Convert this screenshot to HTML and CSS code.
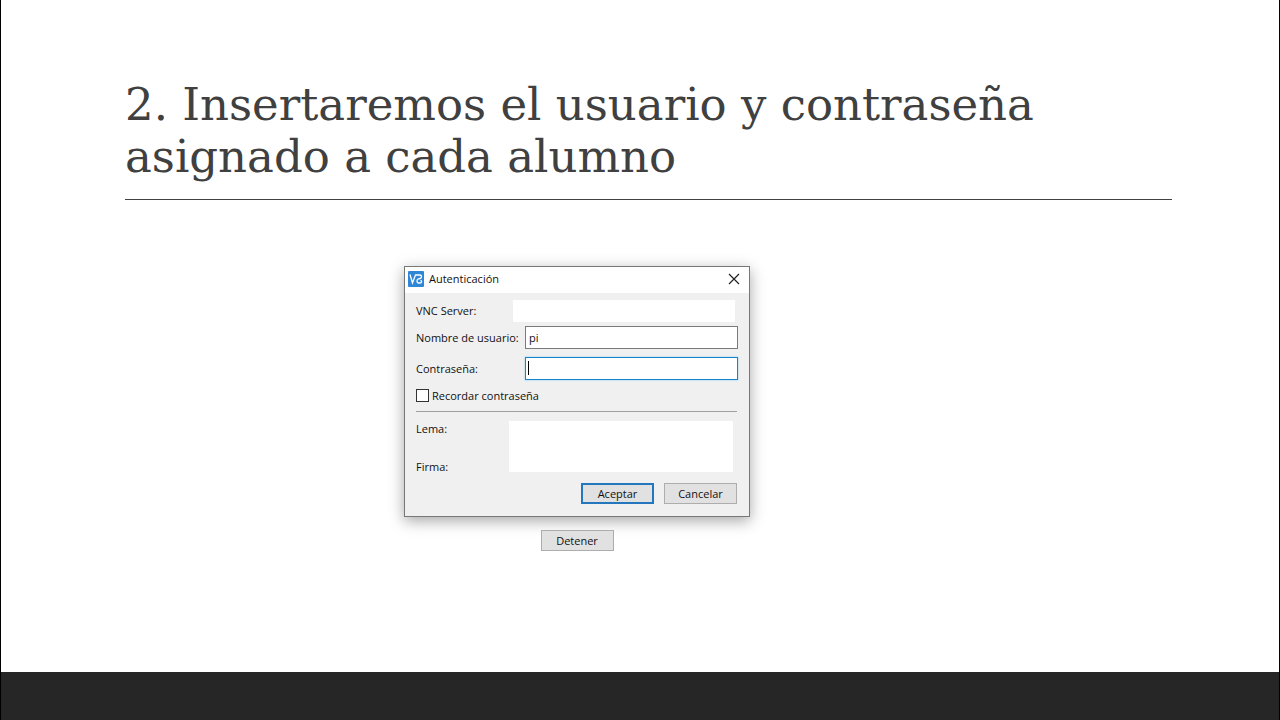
FILE: index.html
```html
<!DOCTYPE html>
<html lang="es">
<head>
  <meta charset="UTF-8" />
  <meta name="viewport" content="width=device-width, initial-scale=1.0"/>
  <title>Insertar usuario y contraseña</title>
  <link rel="stylesheet" href="styles.css">
</head>
<body>
  <main class="slide">
    <h1>2. Insertaremos el usuario y contraseña asignado a cada alumno</h1>

    <div class="stage">
      <form class="dialog">
        <div class="titlebar">
          <svg class="logo" viewBox="0 0 16 16" aria-hidden="true">
            <rect width="16" height="16" rx="1" fill="#2f86d6"/>
            <path d="M2 3.500 L4.500 12 L7.500 4 H12 C14 4 14 7.300 12 7.500 L10.500 7.800 C8.500 8.300 8.500 12 10.500 12 H12 C14 12 14 9.500 12.500 9.500" fill="none" stroke="#fff" stroke-width="1.300"/>
          </svg>
          <span class="title">Autenticación</span>
          <button type="button" class="close" aria-label="Cerrar">
            <svg viewBox="0 0 12 12"><path d="M1 1 L11 11 M11 1 L1 11" stroke="#222" stroke-width="1.200"/></svg>
          </button>
        </div>

        <div class="content">
          <div class="server">
            <span class="server-label">VNC Server:</span>
            <span class="blank"></span>
          </div>
          <div class="row">
            <label for="usuario">Nombre de usuario:</label>
            <input type="text" id="usuario" class="field" value="pi" />
          </div>
          <div class="row">
            <label for="contrasena">Contraseña:</label>
            <input type="password" id="contrasena" class="field active" />
            <span class="caret"></span>
          </div>
          <div class="remember">
            <input type="checkbox" id="recordar" />
            <label for="recordar">Recordar contraseña</label>
          </div>
          <hr>
          <div class="details">
            <div class="detail-labels">
              <span>Lema:</span>
              <span>Firma:</span>
            </div>
            <span class="blank"></span>
          </div>
          <div class="buttons">
            <button type="submit" class="btn default">Aceptar</button>
            <button type="button" class="btn">Cancelar</button>
          </div>
        </div>
      </form>
      <button type="button" class="btn">Detener</button>
    </div>

    <footer class="band"></footer>
  </main>
</body>
</html>
```
FILE: styles.css
```css
* {
  box-sizing: border-box;
}
body {
  margin: 0;
  background: #fff;
  font-family: "Open Sans", "Noto Sans", sans-serif;
  font-size: 11px;
  line-height: 16px;
  color: #111;
}
.slide {
  display: flex;
  flex-direction: column;
  min-height: 100vh;
  border: solid #000;
  border-width: 0 1px;
}
h1 {
  margin: 79px 107px 0 124px;
  padding-bottom: 16px;
  border-bottom: 1px solid #404040;
  font-family: "DejaVu Serif", serif;
  font-size: 45px;
  font-weight: normal;
  line-height: 52px;
  color: #404040;
}
.stage {
  display: flex;
  flex-direction: column;
  align-items: center;
  gap: 13px;
  width: 346px;
  margin: 66px 0 0 403px;
}
.dialog {
  width: 100%;
  border: 1px solid #777;
  background: #f0f0f0;
  box-shadow: 0 4px 14px rgba(0,0,0,0.35);
}
.titlebar {
  display: flex;
  align-items: center;
  gap: 5px;
  height: 26px;
  padding: 0 9px 2px 3px;
  background: #fff;
}
.logo {
  width: 16px;
  height: 16px;
}
.title {
  flex: 1;
}
.close {
  display: flex;
  padding: 0;
  border: none;
  background: none;
}
.close svg {
  width: 12px;
  height: 12px;
}
.content {
  padding: 7px 11px 12px;
}
.server {
  display: flex;
  align-items: center;
  height: 22px;
  margin-bottom: 4px;
  padding-right: 3px;
}
.server-label {
  width: 97px;
}
.blank {
  flex: 1;
  align-self: stretch;
  background: #fff;
}
.row {
  display: flex;
  align-items: center;
  position: relative;
  margin-bottom: 8px;
}
.row label {
  width: 109px;
  white-space: nowrap;
}
.field {
  flex: 1;
  min-width: 0;
  height: 23px;
  padding: 0 3px;
  border: 1px solid #7a7a7a;
  background: #fff;
  font: inherit;
  color: inherit;
}
.field.active {
  border: 1px solid #1683cf;
  box-shadow: 0 0 2px #8fd0f2;
}
.caret {
  position: absolute;
  left: 112px;
  top: 4px;
  width: 1px;
  height: 14px;
  background: #000;
}
.remember {
  display: flex;
  align-items: center;
  gap: 3px;
  height: 15px;
}
.remember input {
  appearance: none;
  width: 13px;
  height: 13px;
  margin: 0;
  border: 1px solid #333;
  background: #fff;
}
.remember input:checked {
  background: #1683cf;
}
hr {
  margin: 8px 1px 9px 0;
  border: none;
  border-top: 1px solid #a0a0a0;
}
.details {
  display: flex;
  height: 51px;
  padding-right: 5px;
}
.detail-labels {
  display: flex;
  flex-direction: column;
  gap: 22px;
  width: 93px;
}
.buttons {
  display: flex;
  justify-content: flex-end;
  gap: 10px;
  margin-top: 11px;
  padding-right: 1px;
}
.btn {
  width: 73px;
  height: 21px;
  padding: 0;
  border: 1px solid #adadad;
  background: #e1e1e1;
  font: inherit;
  color: inherit;
}
.btn.default {
  border: 2px solid #2477bd;
}
.band {
  height: 48px;
  margin-top: auto;
  background: #262626;
}
```
